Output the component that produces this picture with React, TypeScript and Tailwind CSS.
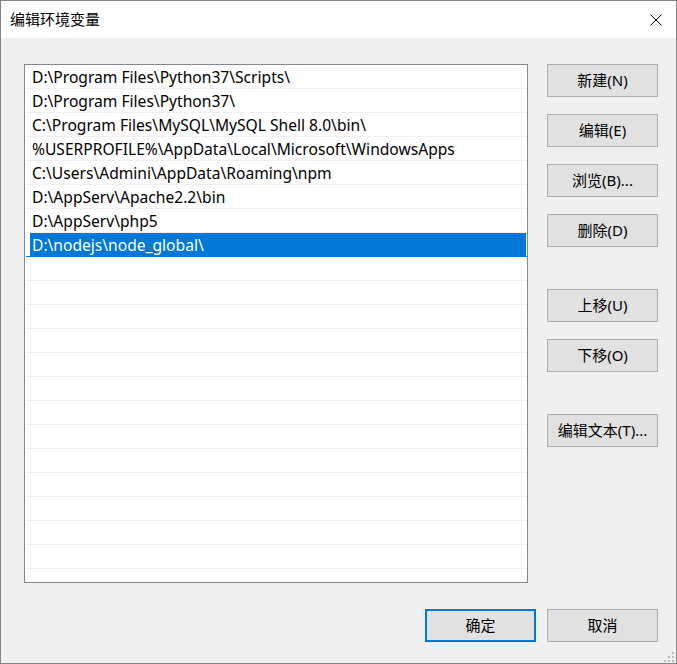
import React from "react";

const paths = [
  "D:\\Program Files\\Python37\\Scripts\\",
  "D:\\Program Files\\Python37\\",
  "C:\\Program Files\\MySQL\\MySQL Shell 8.0\\bin\\",
  "%USERPROFILE%\\AppData\\Local\\Microsoft\\WindowsApps",
  "C:\\Users\\Admini\\AppData\\Roaming\\npm",
  "D:\\AppServ\\Apache2.2\\bin",
  "D:\\AppServ\\php5",
  "D:\\nodejs\\node_global\\",
];

const TOTAL_ROWS = 22;

function Btn({ label, primary = false, className = "" }: { label: string; primary?: boolean; className?: string }) {
  return (
    <div
      className={
        "w-[111px] h-[33px] flex items-center justify-center bg-[#e1e1e1] text-[15px] text-black " +
        (primary ? "border-2 border-[#0078d7] " : "border border-[#adadad] ") +
        className
      }
    >
      {label}
    </div>
  );
}

export default function App() {
  const rows = Array.from({ length: TOTAL_ROWS }, (_, i) => paths[i] ?? "");
  return (
    <div
      className="relative w-[677px] h-[664px] border border-[#858585] bg-[#f0f0f0] flex flex-col overflow-hidden"
      style={{ fontFamily: '"Noto Sans", "Noto Sans CJK SC", sans-serif' }}
    >
      {/* title bar */}
      <div className="h-[37px] bg-white flex items-center justify-between pl-[9px] pr-[14px] shrink-0">
        <span className="text-[15px] text-black leading-none">编辑环境变量</span>
        <svg width="12" height="12" viewBox="0 0 12 12" className="block">
          <path d="M0.5 0.5 L11.5 11.5 M11.5 0.5 L0.5 11.5" stroke="#000" strokeWidth="1" fill="none" />
        </svg>
      </div>

      {/* body */}
      <div className="flex-1 flex flex-col pt-[26px] pl-[23px] pr-[18px] pb-[21px]">
        <div className="flex">
          {/* list */}
          <div className="w-[504px] h-[519px] border border-[#828790] bg-white pl-[1px] overflow-hidden">
            {rows.map((p, i) => {
              const sel = i === 7;
              return (
                <div
                  key={i}
                  className={
                    "h-[24px] border-b " + (sel ? "border-[#0078d7]" : "border-[#f0f0f0]")
                  }
                >
                  <div
                    className={
                      "ml-[4px] mr-[1px] h-full flex items-center pl-[2px] pt-[2px] text-[15.6px] whitespace-nowrap " +
                      (sel ? "bg-[#0078d7] text-white" : "text-black")
                    }
                  >
                    {p}
                  </div>
                </div>
              );
            })}
          </div>

          {/* side buttons */}
          <div className="ml-[19px] flex flex-col">
            <Btn label="新建(N)" />
            <Btn label="编辑(E)" className="mt-[17px]" />
            <Btn label="浏览(B)..." className="mt-[17px]" />
            <Btn label="删除(D)" className="mt-[17px]" />
            <Btn label="上移(U)" className="mt-[42px]" />
            <Btn label="下移(O)" className="mt-[17px]" />
            <Btn label="编辑文本(T)..." className="mt-[42px]" />
          </div>
        </div>

        {/* bottom buttons */}
        <div className="mt-[26px] flex justify-end gap-[11px]">
          <Btn label="确定" primary />
          <Btn label="取消" />
        </div>
      </div>

      {/* resize grip */}
      <svg width="10" height="10" viewBox="0 0 10 10" className="absolute right-[2px] bottom-[1px]">
        <rect x="8" y="0" width="2" height="2" fill="#bcbcbc" />
        <rect x="4" y="4" width="2" height="2" fill="#bcbcbc" />
        <rect x="8" y="4" width="2" height="2" fill="#bcbcbc" />
        <rect x="0" y="8" width="2" height="2" fill="#bcbcbc" />
        <rect x="4" y="8" width="2" height="2" fill="#bcbcbc" />
        <rect x="8" y="8" width="2" height="2" fill="#bcbcbc" />
      </svg>
    </div>
  );
}
